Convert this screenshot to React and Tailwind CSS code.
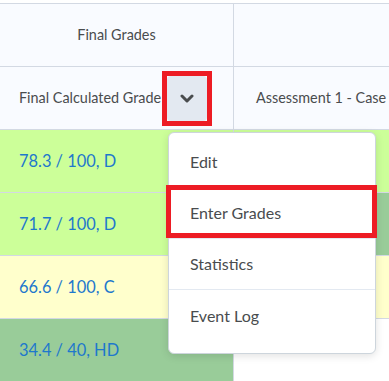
const rows = [
  { grade: '78.3 / 100, D', left: 'bg-[#ccff99]', right: 'bg-[#ccff99]' },
  { grade: '71.7 / 100, D', left: 'bg-[#ccff99]', right: 'bg-[#99cc99]' },
  { grade: '66.6 / 100, C', left: 'bg-[#ffffcc]', right: 'bg-[#ffffcc]' },
  { grade: '34.4 / 40, HD', left: 'bg-[#99cc99]', right: 'bg-white' },
]

const menuItems = ['Edit', 'Enter Grades', 'Statistics', 'Event Log']

function Chevron() {
  return (
    <svg width="14" height="9" viewBox="0 0 14 9" fill="none">
      <polyline
        points="2,2 7,7 12,2"
        stroke="#494c4e"
        strokeWidth="3"
        strokeLinecap="round"
        strokeLinejoin="round"
      />
    </svg>
  )
}

function GradeMenu() {
  return (
    <div className="absolute left-[168px] top-[132px] z-20 w-[208px] rounded-md border border-[#cdd5dc] bg-white pb-[12px] pt-[4px] shadow-[0_2px_8px_rgba(0,0,0,0.12)]">
      {menuItems.map((item, i) => (
        <div
          key={item}
          className={`relative flex h-[51px] items-center px-[21px] text-[16px] text-[#494c4e] ${
            i < menuItems.length - 1 ? 'border-b border-[#e3e9f1]' : ''
          }`}
        >
          {item}
          {item === 'Enter Grades' && (
            <span className="absolute -left-[3px] -right-[2px] -top-[3px] bottom-0 border-[5px] border-[#ed1c24]" />
          )}
        </div>
      ))}
    </div>
  )
}

export default function App() {
  return (
    <div className="relative h-[381px] w-[389px] overflow-hidden bg-white font-['Lato','Noto_Sans',sans-serif]">
      <div className="h-[3px]" />
      <div className="border-t border-[#d3d9e3]">
        {/* header rows */}
        <div className="flex h-[63px] border-b border-[#d3d9e3] bg-[#f9fbff]">
          <div className="flex w-[234px] shrink-0 items-center justify-center border-r border-[#d3d9e3] text-[14.4px] text-[#494c4e]">
            Final Grades
          </div>
          <div className="flex-1" />
        </div>
        <div className="flex h-[63px] border-b border-[#d3d9e3] bg-[#f9fbff]">
          <div className="flex w-[234px] shrink-0 items-center border-r border-[#d3d9e3] pl-[19px] text-[14.4px] text-[#494c4e]">
            <span className="whitespace-nowrap">Final Calculated Grade</span>
            <div className="relative ml-[6px] flex h-[45px] w-[40px] shrink-0 items-center justify-center rounded-[4px] bg-[#e3e9f1]">
              <Chevron />
              <span className="absolute -inset-[5px] border-[5px] border-[#ed1c24]" />
            </div>
          </div>
          <div className="flex flex-1 items-center whitespace-nowrap pl-[22px] text-[14.4px] text-[#494c4e]">
            Assessment 1 - Case
          </div>
        </div>

        {/* body rows */}
        {rows.map((r) => (
          <div key={r.grade} className="flex h-[63px] border-b border-[#d3d9e3]">
            <div
              className={`flex w-[234px] shrink-0 items-center border-r border-[#d3d9e3] pl-[19px] text-[16.4px] text-[#1e78cc] ${r.left}`}
            >
              {r.grade}
            </div>
            <div className={`flex-1 ${r.right}`} />
          </div>
        ))}
      </div>

      <GradeMenu />
    </div>
  )
}
